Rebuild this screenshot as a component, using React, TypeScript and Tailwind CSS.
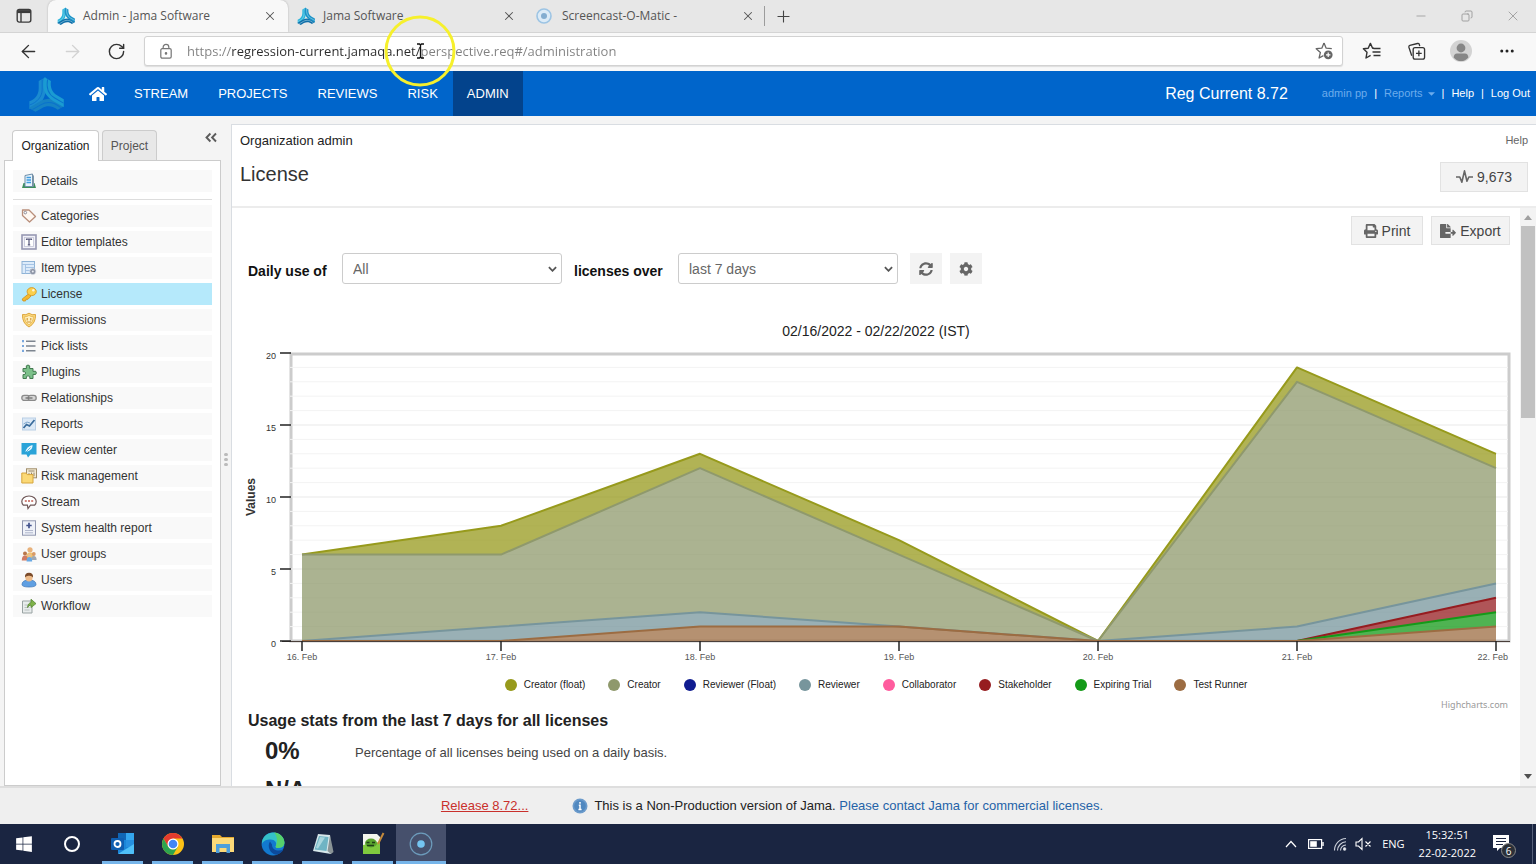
import { useState } from "react";
import type { ReactNode } from "react";
import { ArrowLeft, ArrowRight, Copy, Minus, MoreHorizontal, Plus, RotateCw, X } from "lucide-react";
import { FaCog, FaFileExport, FaHome, FaPrint, FaSyncAlt, FaWindows } from "react-icons/fa";

// ---------- data ----------

const days = ["16. Feb", "17. Feb", "18. Feb", "19. Feb", "20. Feb", "21. Feb", "22. Feb"];

// stacked tops and bottoms per day, drawn from the top layer down
const layers = [
  { name: "Creator (float)", color: "#979a1c", top: [6, 8, 13, 7, 0, 19, 13], base: [6, 6, 12, 6, 0, 18, 12] },
  { name: "Creator", color: "#8f996c", top: [6, 6, 12, 6, 0, 18, 12], base: [0, 1, 2, 1, 0, 1, 4] },
  { name: "Reviewer", color: "#77959c", top: [0, 1, 2, 1, 0, 1, 4], base: [0, 0, 1, 1, 0, 0, 3] },
  { name: "Stakeholder", color: "#961c20", top: [0, 0, 0, 0, 0, 0, 3], base: [0, 0, 0, 0, 0, 0, 2], from: 5 },
  { name: "Expiring Trial", color: "#149a18", top: [0, 0, 0, 0, 0, 0, 2], base: [0, 0, 0, 0, 0, 0, 1], from: 5 },
  { name: "Test Runner", color: "#9c6c42", top: [0, 0, 1, 1, 0, 0, 1], base: [0, 0, 0, 0, 0, 0, 0] },
];

const legend = [
  { name: "Creator (float)", color: "#979a1c" },
  { name: "Creator", color: "#8f996c" },
  { name: "Reviewer (Float)", color: "#101c90" },
  { name: "Reviewer", color: "#77959c" },
  { name: "Collaborator", color: "#ff5c9e" },
  { name: "Stakeholder", color: "#961c20" },
  { name: "Expiring Trial", color: "#149a18" },
  { name: "Test Runner", color: "#9c6c42" },
];

const px = (i: number) => 62 + i * 199;
const py = (v: number) => 300 - v * 14.4;

// ---------- logos and icons ----------

function JamaLogo({ className, dim }: { className: string; dim?: boolean }) {
  const blade = "M15.6 1 L9.5 4.5 V11 C9.5 17 6 20.5 1.2 22.5 V29 C10 27.5 15.6 21 15.6 12 Z";
  const colors = dim ? ["#1b8bd0", "#1682c4", "#1a9bd2"] : ["#2bb5dc", "#0f6ea8", "#1c93c8"];
  return (
    <svg viewBox="0 0 32 32" className={className} aria-hidden="true">
      {[0, 240, 120].map((deg, i) => (
        <g key={deg} transform={`rotate(${deg} 16 19)`}>
          <path d={blade} fill={colors[i]} />
          <path d="M12.6 3 V12 C12.6 18.5 8 23.5 1.4 25.8" fill="none" stroke={dim ? "#0a72cc" : "#bfe6f3"} strokeWidth="0.8" />
        </g>
      ))}
    </svg>
  );
}

function CastIcon() {
  return (
    <svg viewBox="0 0 16 16" className="h-4 w-4" aria-hidden="true">
      <circle cx="8" cy="8" r="7" fill="#dcebf7" stroke="#9cc4e4" strokeWidth="1.6" />
      <circle cx="8" cy="8" r="3" fill="#84add0" />
    </svg>
  );
}

const icons: Record<string, ReactNode> = {
  Details: (
    <>
      <path d="M1 15 L2.5 10 H13.5 L15 15Z" fill="#3c8f5c" />
      <path d="M4 2.5 L11.5 1 V13.5 H4Z" fill="#e8f4fc" stroke="#6d8da8" />
      <path d="M5.5 4.5h4.5M5.5 7h4.5M5.5 9.5h4.5" stroke="#3d9be0" strokeWidth="1.4" />
      <path d="M11.5 1 L13 3 V13.5 H11.5Z" fill="#7f96a8" />
    </>
  ),
  Categories: (
    <>
      <path d="M1.5 2 H8 L14.5 8.5 L8.5 14 L1.5 7.5Z" fill="#fff8f2" stroke="#b98f7b" strokeWidth="1.3" strokeLinejoin="round" />
      <circle cx="4.3" cy="4.6" r="1.3" fill="#fff" stroke="#8b8b96" />
    </>
  ),
  "Editor templates": (
    <>
      <rect x="1" y="1" width="14" height="14" fill="#f1f1f8" stroke="#9798b2" strokeWidth="1.6" />
      <rect x="3.5" y="3.5" width="9" height="9" fill="#fff" stroke="#c3c4d6" strokeWidth="0.8" />
      <path d="M5.5 6V5.2h5V6M8 5.2v5.6M6.8 10.8h2.4" stroke="#55567a" strokeWidth="1.2" fill="none" />
    </>
  ),
  "Item types": (
    <>
      <rect x="1" y="1.5" width="12.5" height="12" fill="#dcebfa" stroke="#8fb3d6" />
      <path d="M1 4.5h12.5M4.5 4.5v9M4.5 7.5h9M4.5 10.5h9" stroke="#9fc0e2" strokeWidth="0.9" />
      <circle cx="11.8" cy="11.6" r="3" fill="#8d95a6" stroke="#d9dde6" strokeDasharray="1.4 1" />
      <circle cx="11.8" cy="11.6" r="1" fill="#e9ecf2" />
    </>
  ),
  License: (
    <>
      <path d="M8 7.5 L1.2 13 L2 15 H4.5 L5 13.3 H7 L10 10Z" fill="#f5b92d" stroke="#cf8e1c" strokeWidth="0.8" />
      <ellipse cx="10.7" cy="5.6" rx="4.6" ry="4" fill="#fbd04d" stroke="#d2921c" strokeWidth="0.8" />
      <circle cx="12.3" cy="4.3" r="1.2" fill="#fff6d6" />
    </>
  ),
  Permissions: (
    <>
      <path d="M1.5 2.5 Q5 3.5 8 1.2 Q11 3.5 14.5 2.5 Q15 11 8 15 Q1 11 1.5 2.5Z" fill="#fbd87a" stroke="#dda63f" />
      <path d="M8 3.4 Q10 5 12.4 4.6 Q12.4 10 8 12.8 Q3.6 10 3.6 4.6 Q6 5 8 3.4Z" fill="#fff0bf" stroke="#e3ae45" strokeWidth="0.7" />
      <path d="M6.2 6v2.5M9.8 6v2.5M6 10h4" stroke="#cf9433" strokeWidth="1.1" />
    </>
  ),
  "Pick lists": (
    <>
      <path d="M5 3.2h9.5M5 8h9.5M5 12.8h9.5" stroke="#7d8590" strokeWidth="1.5" />
      <path d="M1 3.2h2M1 8h2M1 12.8h2" stroke="#79a7dd" strokeWidth="2.2" />
    </>
  ),
  Plugins: (
    <path
      d="M2 4.5 H5.4 Q4.4 1 7 1 Q9.6 1 8.6 4.5 H12 V7.4 Q15.4 6.2 15.4 8.9 Q15.4 11.4 12 10.4 V14.5 H8.8 Q9.6 11.8 7 11.8 Q4.6 11.8 5.4 14.5 H2 V10.6 Q4.6 11.2 4.6 9 Q4.6 7 2 7.8Z"
      fill="#7cc08a" stroke="#437a50"
    />
  ),
  Relationships: (
    <>
      <rect x="0.8" y="5.4" width="8" height="5" rx="2.5" fill="#d6d6d6" stroke="#8a8a8a" strokeWidth="1.3" />
      <rect x="7.2" y="5.4" width="8" height="5" rx="2.5" fill="#d6d6d6" stroke="#8a8a8a" strokeWidth="1.3" />
      <path d="M4.5 8h7" stroke="#747474" strokeWidth="1.4" />
    </>
  ),
  Reports: (
    <>
      <rect x="1.5" y="2" width="13" height="12" fill="#dce9f6" stroke="#b9cfe6" />
      <path d="M2.5 12 L5.5 8.5 L8.5 10 L13.5 4" stroke="#3a6c9c" strokeWidth="1.8" fill="none" />
      <path d="M2.5 8 L6 6 L9 7" stroke="#7ea6cc" strokeWidth="1" fill="none" />
    </>
  ),
  "Review center": (
    <>
      <path d="M0.5 1 H15.5 V12.5 H9.5 L7 15.5 L5.5 12.5 H0.5Z" fill="#2aa3d8" />
      <path d="M4.5 10 Q5.5 4.5 11.5 3 Q12 7.5 6.5 9.5Z" fill="#e9f7fd" />
      <path d="M4 11 L9.5 5.5" stroke="#2aa3d8" strokeWidth="0.8" />
    </>
  ),
  "Risk management": (
    <>
      <rect x="5.5" y="0.8" width="10" height="9" fill="#f3ead2" stroke="#a08d6a" />
      <path d="M7.5 3h6M8 5.2v3M10.5 4.6v3.6M13 4.6v3.6" stroke="#8b7c60" strokeWidth="0.9" />
      <path d="M0.8 5 H5 L6.2 6.6 H12 V15 H0.8Z" fill="#fbd976" stroke="#d6a53d" />
    </>
  ),
  Stream: (
    <>
      <path d="M8 2 C12.5 2 15.2 4.6 15.2 7.6 C15.2 9.2 14.6 10.4 13.6 11.2 H9.5 L7 14.5 L6.4 11.2 H2.4 C1.4 10.4 0.8 9.2 0.8 7.6 C0.8 4.6 3.5 2 8 2Z" fill="#fff" stroke="#6f5757" strokeWidth="1.2" />
      <path d="M3.8 7h2M7 7h2M10.2 7h2" stroke="#c05c50" strokeWidth="1.4" />
    </>
  ),
  "System health report": (
    <>
      <rect x="1.5" y="0.8" width="13" height="14.4" fill="#eef1f8" stroke="#9097b0" />
      <path d="M8 2.8v5.4M5.3 5.5h5.4" stroke="#42528c" strokeWidth="1.7" />
      <path d="M4 10.5h8M4 12.8h8" stroke="#a9b0c6" strokeWidth="0.9" />
    </>
  ),
  "User groups": (
    <>
      <circle cx="9" cy="3.8" r="2.6" fill="#e8b27c" />
      <path d="M5 12 Q5 6.5 9 6.5 Q13.5 6.5 13.5 12Z" fill="#f1c56c" />
      <circle cx="4" cy="7.4" r="2" fill="#b9764a" />
      <path d="M0.8 14.5 Q0.8 9.5 4 9.5 Q7 9.5 7 14.5Z" fill="#cf7a64" />
      <circle cx="12.8" cy="8" r="1.9" fill="#d89a68" />
      <path d="M10 14 Q10 10 12.8 10 Q15.6 10 15.6 14Z" fill="#9fa8b4" />
      <circle cx="8.4" cy="9.2" r="1.8" fill="#eabf94" />
      <path d="M5.6 15.4 Q5.6 11 8.4 11 Q11.2 11 11.2 15.4Z" fill="#69a9e4" />
    </>
  ),
  Users: (
    <>
      <path d="M1 12.6 Q1 8 8 8 Q15 8 15 12.6 Q15 15 8 15 Q1 15 1 12.6Z" fill="#5f9fe2" stroke="#3a72b4" strokeWidth="0.7" />
      <ellipse cx="8" cy="5.6" rx="3.6" ry="4" fill="#edbb8a" />
      <path d="M4 5.4 Q3.6 0.8 8 0.8 Q12.4 0.8 12 5.4 Q10.5 3.6 8 3.8 Q5.4 3.6 4 5.4Z" fill="#7b4b2a" />
    </>
  ),
  Workflow: (
    <>
      <path d="M1.5 3 H11 V15 H1.5Z" fill="#e8ecec" stroke="#99a3a3" />
      <path d="M3.5 7h5M3.5 9.5h5M3.5 12h5" stroke="#b4bcbc" strokeWidth="0.9" />
      <path d="M6.5 9.5 Q7 5 10 4.6 V1.2 L15 5.6 L10 9.6 V7 Q8 7 6.5 9.5Z" fill="#7fb24a" stroke="#4f7f2c" strokeWidth="0.7" />
    </>
  ),
};

const menu = Object.keys(icons);

// ---------- browser chrome ----------

function BrowserTabs() {
  const tabs = [
    { title: "Admin - Jama Software", icon: <JamaLogo className="h-[18px] w-[18px]" />, active: true },
    { title: "Jama Software", icon: <JamaLogo className="h-[18px] w-[18px]" /> },
    { title: "Screencast-O-Matic -", icon: <CastIcon /> },
  ];
  return (
    <div className="flex h-8 shrink-0 items-stretch bg-[#e7e7e7]">
      <button aria-label="Tab actions" className="flex w-12 items-center justify-center">
        <svg viewBox="0 0 16 16" className="h-4 w-4" fill="none" stroke="#3c3c3c" strokeWidth="1.4">
          <rect x="1.2" y="1.5" width="13.6" height="12.6" rx="2" />
          <path d="M1.2 3.6h13.6" strokeWidth="3" />
          <path d="M5 5v9" />
        </svg>
      </button>
      {tabs.map((t) => (
        <div
          key={t.title}
          className={
            t.active
              ? "flex w-[240px] items-center rounded-t-lg bg-[#f8f8f8] px-[9px] shadow-[0_0_2px_#aaa]"
              : "flex w-[239px] items-center px-[9px]"
          }
        >
          <span className="flex w-[26px] items-center">{t.icon}</span>
          <button className="flex-1 text-left font-['Open_Sans',sans-serif] text-xs text-[#555]">{t.title}</button>
          <button aria-label={`Close ${t.title}`} className="flex w-[18px] justify-center text-[#555]">
            <X size={14} strokeWidth={1.8} />
          </button>
        </div>
      ))}
      <div className="my-[6px] -ml-[2px] w-px bg-[#9c9c9c]" />
      <button aria-label="New tab" className="flex w-9 items-center justify-center text-[#444]">
        <Plus size={19} strokeWidth={1.4} />
      </button>
      <div className="flex flex-1 justify-end text-[#999]">
        <button aria-label="Minimize" className="flex w-[46px] items-center justify-center"><Minus size={14} strokeWidth={1.4} /></button>
        <button aria-label="Restore" className="flex w-[46px] items-center justify-center"><Copy size={12} strokeWidth={1.8} className="-scale-x-100" /></button>
        <button aria-label="Close" className="flex w-[46px] items-center justify-center"><X size={16} strokeWidth={1.3} /></button>
      </div>
    </div>
  );
}

function AddressBar() {
  return (
    <div className="flex h-[39px] shrink-0 items-center border-t border-[#d4d4d4] bg-[#f8f8f8] px-[6px] pb-[2px]">
      <button aria-label="Back" className="flex w-11 justify-center text-[#333]"><ArrowLeft size={21} strokeWidth={1.6} /></button>
      <button aria-label="Forward" className="flex w-11 justify-center text-[#d2d2d2]"><ArrowRight size={21} strokeWidth={1.6} /></button>
      <button aria-label="Refresh" className="flex w-11 justify-center text-[#333]"><RotateCw size={19} strokeWidth={1.8} /></button>
      <div className="ml-[6px] flex h-[30px] flex-1 items-center rounded-[3px] border border-[#d2d2d2] bg-white shadow-[0_1px_1px_#ddd]">
        <svg viewBox="0 0 16 18" className="mx-[13px] h-[17px] w-4 shrink-0" fill="none" stroke="#777" strokeWidth="1.3">
          <rect x="2.5" y="6" width="11" height="10" rx="1.5" />
          <path d="M5 6V4.5a3 3 0 0 1 6 0V6" />
          <circle cx="8" cy="11" r="0.7" fill="#777" />
        </svg>
        <input
          aria-label="Address"
          defaultValue="https://regression-current.jamaqa.net/perspective.req#/administration"
          className="h-full min-w-0 flex-1 bg-[linear-gradient(90deg,#808080_45px,#2a2a2a_45px,#2a2a2a_233px,#808080_233px)] bg-clip-text font-['Open_Sans',sans-serif] text-[13px] text-transparent outline-none"
        />
        <button aria-label="Add to favorites" className="mr-2">
          <svg viewBox="0 0 20 20" className="h-5 w-5">
            <path d="M10 2 L12.2 7.2 L17.8 7.7 M10 2 L7.8 7.2 L2.2 7.7 L6.4 11.4 L5.1 17 L9.4 14.6" fill="none" stroke="#666" strokeWidth="1.3" strokeLinejoin="round" />
            <circle cx="14.2" cy="13.8" r="4.4" fill="#666" />
            <path d="M14.2 11.6v4.4M12 13.8h4.4" stroke="#fff" strokeWidth="1.2" />
          </svg>
        </button>
      </div>
      <button aria-label="Favorites" className="ml-[7px] flex w-11 justify-center">
        <svg viewBox="0 0 20 20" className="h-5 w-5" fill="none" stroke="#333" strokeWidth="1.4" strokeLinejoin="round">
          <path d="M12 7.2 H10.6 L8.4 2.4 L6.2 7.2 L1.4 7.8 L5 11.3 L4 17 L8.6 14.4" />
          <path d="M11.5 7.5h7M10.5 11h8M11.5 14.5h7" />
        </svg>
      </button>
      <button aria-label="Collections" className="flex w-11 justify-center">
        <svg viewBox="0 0 20 20" className="h-[19px] w-[19px]" fill="none" stroke="#333" strokeWidth="1.4" strokeLinejoin="round">
          <path d="M5 14.5 L2 5.5 Q1.6 4 3 3.6 L11 1.6 Q12.6 1.2 13 2.8 L13.4 4.4" />
          <rect x="6.5" y="6" width="12" height="12" rx="2" />
          <path d="M12.5 9v6M9.5 12h6" />
        </svg>
      </button>
      <button aria-label="Profile" className="flex w-[46px] justify-center">
        <svg viewBox="0 0 22 22" className="h-[22px] w-[22px]">
          <circle cx="11" cy="11" r="11" fill="#d3d3d3" />
          <circle cx="11" cy="8" r="4.4" fill="#868686" />
          <path d="M3.6 17.4 Q4 13.6 7 13.6 H15 Q18 13.6 18.4 17.4 Q15.4 21 11 21 Q6.6 21 3.6 17.4Z" fill="#868686" />
        </svg>
      </button>
      <button aria-label="Settings and more" className="flex w-[46px] justify-center text-[#222]"><MoreHorizontal size={18} /></button>
    </div>
  );
}

// ---------- app ----------

function TopNav() {
  return (
    <header className="flex h-[45px] shrink-0 items-center bg-[#0065cb] text-white">
      <a href="#top" aria-label="Jama" className="ml-[28px]"><JamaLogo dim className="h-9 w-9" /></a>
      <a href="#home" aria-label="Home" className="ml-[25px] mr-3"><FaHome size={18} /></a>
      <nav className="flex h-full items-stretch text-[13px]">
        {["STREAM", "PROJECTS", "REVIEWS", "RISK", "ADMIN"].map((n) => (
          <a
            key={n}
            href={`#${n.toLowerCase()}`}
            className={n === "ADMIN" ? "flex items-center bg-[#03438c] px-[14px]" : "flex items-center px-[15px]"}
          >
            {n}
          </a>
        ))}
      </nav>
      <span className="ml-auto mr-[34px] text-base">Reg Current 8.72</span>
      <div className="flex items-center gap-[7px] pr-[6px] text-[11px]">
        <a href="#me" className="text-[#6cacec]">admin pp</a>
        <span>|</span>
        <a href="#reports" className="flex items-center gap-[5px] text-[#6cacec]">
          Reports
          <svg viewBox="0 0 8 4" className="h-1 w-[7px]"><path d="M0 0h8L4 4Z" fill="#6cacec" /></svg>
        </a>
        <span>|</span>
        <a href="#help">Help</a>
        <span>|</span>
        <a href="#logout">Log Out</a>
      </div>
    </header>
  );
}

function Sidebar() {
  const [current, setCurrent] = useState("License");
  return (
    <aside className="flex w-[217px] shrink-0 flex-col pt-[14px]">
      <div className="flex items-start pl-2">
        <button className="relative -mb-px h-[31px] w-[87px] rounded-t-sm border border-b-0 border-[#ccc] bg-white text-xs text-[#222]">Organization</button>
        <button className="ml-[3px] h-[30px] w-[55px] rounded-t-sm border border-b-0 border-[#ccc] bg-[#e8e8e8] text-xs text-[#555]">Project</button>
        <button aria-label="Collapse panel" className="ml-auto mr-1 pt-[2px]">
          <svg viewBox="0 0 12 10" className="h-[11px] w-3" fill="none" stroke="#5c5c5c" strokeWidth="1.9">
            <path d="M5.4 1 L1.5 5 L5.4 9M11 1 L7.1 5 L11 9" />
          </svg>
        </button>
      </div>
      <div className="flex-1 border border-[#ccc] bg-white px-2 pt-[9px]">
        {menu.map((m) => (
          <div key={m} className={m === "Details" ? "mb-[5px] border-b border-[#ddd] pb-[7px]" : "mb-1"}>
            <button
              onClick={() => setCurrent(m)}
              className={
                m === current
                  ? "flex h-[22px] w-full items-center gap-1 bg-[#b5e9fb] pl-2 text-xs text-[#333]"
                  : "flex h-[22px] w-full items-center gap-1 bg-[#f9f9f9] pl-2 text-xs text-[#333]"
              }
            >
              <svg viewBox="0 0 16 16" className="h-4 w-4" fill="none" aria-hidden="true">{icons[m]}</svg>
              {m}
            </button>
          </div>
        ))}
      </div>
    </aside>
  );
}

function UsageChart() {
  return (
    <svg viewBox="0 0 1272 326" className="block w-full font-['Liberation_Sans',Arial,sans-serif]" role="img" aria-label="Daily license usage">
      <rect x="51" y="13" width="1218" height="287" fill="#fff" stroke="#ccc" strokeWidth="3" />
      {Array.from({ length: 19 }, (_, i) => (
        <path key={i} d={`M50 ${py(i + 1)}H1268`} stroke={(i + 1) % 5 ? "#f3f3f3" : "#e9e9e9"} strokeWidth="1" />
      ))}
      {layers.map((l) => {
        const idx = days.map((_, i) => i).slice(l.from ?? 0);
        const top = idx.map((i) => `${px(i)},${py(l.top[i])}`);
        const base = idx.map((i) => `${px(i)},${py(l.base[i])}`).reverse();
        return (
          <g key={l.name}>
            <polygon points={[...top, ...base].join(" ")} fill={l.color} fillOpacity="0.75" />
            <polyline points={top.join(" ")} fill="none" stroke={l.color} strokeWidth="2" strokeLinejoin="round" />
          </g>
        );
      })}
      <path d="M42 300.5H1270" stroke="#4a3f3a" strokeWidth="1.2" />
      {[0, 5, 10, 15, 20].map((v) => (
        <g key={v}>
          <path d={`M40 ${py(v)}H51`} stroke="#222" strokeWidth="1.5" />
          <text x="36" y={py(v) + 6} textAnchor="end" fontSize="9" fill="#333">{v}</text>
        </g>
      ))}
      {days.map((d, i) => (
        <g key={d}>
          <path d={`M${px(i)} 300V310`} stroke="#222" strokeWidth="1.5" />
          <text x={i === 6 ? 1268 : px(i)} y="319" textAnchor={i === 6 ? "end" : "middle"} fontSize="9" fill="#555">{d}</text>
        </g>
      ))}
      <text transform="translate(15 156) rotate(-90)" textAnchor="middle" fontSize="12" fontWeight="bold" fill="#333">Values</text>
    </svg>
  );
}

function Select({ id, options }: { id: string; options: string[] }) {
  return (
    <div className="relative w-[220px]">
      <select id={id} className="h-[31px] w-full appearance-none rounded-[3px] border border-[#ccc] bg-white pl-[10px] text-sm text-[#666]">
        {options.map((o) => <option key={o}>{o}</option>)}
      </select>
      <svg viewBox="0 0 10 6" className="pointer-events-none absolute right-[5px] top-[13px] h-[6px] w-[9px]" fill="none" stroke="#555" strokeWidth="2">
        <path d="M1 1 L5 5 L9 1" />
      </svg>
    </div>
  );
}

const greyButton = "flex items-center justify-center border border-[#e2e2e2] bg-[#f3f3f3] text-sm text-[#444]";

function LicensePage() {
  return (
    <main className="flex min-w-0 flex-1 flex-col border-l border-t border-[#d9dde2] bg-white">
      <div className="flex h-[83px] shrink-0 justify-between border-b-2 border-[#ececec] pl-2 pr-2">
        <div>
          <p className="pt-[7px] text-[13px] leading-[18px] text-[#222]">Organization admin</p>
          <h1 className="mt-[10px] text-xl leading-7 text-[#333]">License</h1>
        </div>
        <div className="flex flex-col items-end">
          <a href="#help" className="pt-[6px] text-[11px] leading-[18px] text-[#666]">Help</a>
          <button className={`${greyButton} mt-[13px] h-[30px] w-[88px] gap-1`}>
            <svg viewBox="0 0 18 16" className="h-4 w-[17px]" fill="none" stroke="#666" strokeWidth="1.7" strokeLinejoin="round">
              <path d="M0 8 H4 L6.2 13.5 L9 1.5 L11.6 12.5 L13.6 8 H18" />
            </svg>
            9,673
          </button>
        </div>
      </div>

      <div className="flex min-h-0 flex-1">
        <div className="min-w-0 flex-1 overflow-hidden px-2">
          <div className="flex justify-end gap-2 pr-[2px] pt-2">
            <button className={`${greyButton} h-[29px] w-[72px] gap-1`}><FaPrint size={14} color="#666" />Print</button>
            <button className={`${greyButton} h-[29px] w-[79px] gap-1`}><FaFileExport size={16} color="#666" />Export</button>
          </div>

          <div className="mt-2 flex h-[31px] items-center pl-2 text-sm text-[#111]">
            <label htmlFor="kind" className="w-[94px] pt-[5px] font-bold">Daily use of</label>
            <Select id="kind" options={["All", "Creator", "Reviewer"]} />
            <label htmlFor="range" className="ml-3 w-[104px] pt-[5px] font-bold">licenses over</label>
            <Select id="range" options={["last 7 days", "last 30 days"]} />
            <button aria-label="Refresh chart" className="ml-3 flex h-[31px] w-8 items-center justify-center bg-[#f3f3f3] text-[#666]"><FaSyncAlt size={14} /></button>
            <button aria-label="Chart settings" className="ml-2 flex h-[31px] w-8 items-center justify-center bg-[#f3f3f3] text-[#666]"><FaCog size={14} /></button>
          </div>

          <h2 className="mt-[37px] text-center text-sm text-[#222]">02/16/2022 - 02/22/2022 (IST)</h2>
          <UsageChart />
          <div className="mt-[10px] flex justify-center gap-[23px]">
            {legend.map((l) => (
              <button key={l.name} className="flex items-center gap-[7px] text-[10px] leading-4 text-[#222]">
                <svg viewBox="0 0 12 12" className="h-3 w-3"><circle cx="6" cy="6" r="6" fill={l.color} /></svg>
                {l.name}
              </button>
            ))}
          </div>
          <p className="mt-[6px] pr-1 text-right font-['Noto_Sans',sans-serif] text-[9px] leading-3 text-[#999]">
            <a href="#highcharts">Highcharts.com</a>
          </p>

          <section className="pl-2">
            <h3 className="text-base font-bold leading-5 text-[#222]">Usage stats from the last 7 days for all licenses</h3>
            {[
              ["0%", "Percentage of all licenses being used on a daily basis."],
              ["N/A", ""],
            ].map(([value, label]) => (
              <div key={value} className="flex h-[39px] items-center pl-[17px]">
                <strong className="w-[90px] text-2xl text-[#222]">{value}</strong>
                <span className="pt-[5px] text-[13px] text-[#444]">{label}</span>
              </div>
            ))}
          </section>
        </div>

        {/* scrollbar */}
        <div className="flex w-4 shrink-0 flex-col items-center bg-[#f3f3f3] py-[7px]">
          <svg viewBox="0 0 8 5" className="h-[5px] w-2"><path d="M0 5 L4 0 L8 5Z" fill="#a0a0a0" /></svg>
          <div className="mt-[6px] h-[34%] w-[14px] bg-[#c1c1c1]" />
          <svg viewBox="0 0 8 5" className="mt-auto h-[5px] w-2"><path d="M0 0 L4 5 L8 0Z" fill="#505050" /></svg>
        </div>
      </div>
    </main>
  );
}

function Footer() {
  return (
    <footer className="flex h-[38px] shrink-0 items-center justify-center border-t-2 border-[#dedede] bg-[#efefef] pl-2 text-[13px]">
      <a href="#release" className="text-[#c9302c] underline">Release 8.72...</a>
      <svg viewBox="0 0 16 16" className="ml-11 mr-[6px] h-4 w-4">
        <circle cx="8" cy="8" r="7.5" fill="#6c9bcb" />
        <circle cx="8" cy="8" r="5.8" fill="#5088c0" />
        <path d="M8 4v1.8M6.8 7.2H8v4.2M6.4 11.6h3.2" stroke="#fff" strokeWidth="1.5" fill="none" />
      </svg>
      <span className="text-[#222]">
        This is a Non-Production version of Jama. <a href="#contact" className="text-[#2563a8]">Please contact Jama for commercial licenses.</a>
      </span>
    </footer>
  );
}

// ---------- taskbar ----------

const apps = [
  {
    name: "Outlook",
    icon: (
      <>
        <rect x="7" y="1" width="16" height="21" rx="1" fill="#1a86d8" />
        <rect x="7" y="1" width="8" height="7" fill="#1066b5" />
        <rect x="15" y="1" width="8" height="7" fill="#34a6ee" />
        <rect x="15" y="8" width="8" height="7" fill="#2690e0" />
        <path d="M7 22 L23 12 V21 Q23 22 22 22Z" fill="#4fc0f8" />
        <rect x="0" y="6" width="13" height="12" rx="1" fill="#0f5eb0" />
        <circle cx="6.5" cy="12" r="3" fill="none" stroke="#fff" strokeWidth="1.8" />
      </>
    ),
  },
  {
    name: "Chrome",
    icon: (
      <>
        <circle cx="12" cy="12" r="11" fill="#fbc116" />
        <path d="M2.5 6.5 A11 11 0 0 1 21.5 6.5 H12 L7.2 14.8Z" fill="#e33b2e" />
        <path d="M2.5 6.5 L7.2 14.8 L12 17.5 L16.8 14.8 L12 23 A11 11 0 0 1 2.5 6.5Z" fill="#2da44e" />
        <circle cx="12" cy="12" r="5.5" fill="#fff" />
        <circle cx="12" cy="12" r="4.3" fill="#4286f5" />
      </>
    ),
  },
  {
    name: "File Explorer",
    icon: (
      <>
        <path d="M1 3 H9 L11 5 H23 V20 H1Z" fill="#e5a92e" />
        <rect x="1" y="6" width="22" height="14" fill="#fcd978" />
        <path d="M5 21 V12 H19 V21 H15.5 V16 H8.5 V21Z" fill="#4e9fdb" />
      </>
    ),
  },
  {
    name: "Edge",
    icon: (
      <>
        <circle cx="12" cy="12" r="11.4" fill="#1279cf" />
        <path d="M1 10 C2 4 7 0.6 12 0.6 C19 0.6 23.4 5.6 23.4 10.6 C23.4 14.4 20.4 16 17.6 16 C15 16 14 15 15 13.4 C16 11 14 7.6 9.6 7.6 C5.6 7.6 2 9 1 12Z" fill="#35c1c8" />
        <path d="M13 0.6 C19 1 23.4 5.6 23.4 10.6 C23.4 14.4 20.4 16 17.6 16 C15 16 14 15 15 13.4 C17 9 16 4 13 0.6Z" fill="#56d16c" />
        <path d="M9 9.5 C6 14 8.6 21.5 15 22.8 C18.6 22 21.4 19.6 22.4 17.4 C17 20 10.6 17.6 11 12.4Z" fill="#0c4a9c" />
      </>
    ),
  },
  {
    name: "Notepad",
    icon: (
      <>
        <path d="M7 2 L19 3 L20 22 L2 19Z" fill="#d7e7ea" />
        <path d="M8 4 L17.5 5 L15.5 19 L3.5 17.5Z" fill="#6fb4c4" />
        <path d="M9 5 L14 5.5 L7 16.5 L5 16Z" fill="#a9d6de" />
        <path d="M19 3 L22.5 20 L20 22 L16.5 19Z" fill="#8a9496" />
      </>
    ),
  },
  {
    name: "Notepad++",
    icon: (
      <>
        <path d="M2 2 H16 L19 5 V22 H2Z" fill="#f3f6ee" />
        <path d="M2 13 L19 10 V22 H2Z" fill="#7fc93e" />
        <ellipse cx="10" cy="11" rx="6" ry="4.4" fill="#5aa52e" />
        <path d="M5.5 10.5h3M11 10.5h3M6 13.5h7" stroke="#1f3f18" strokeWidth="1.4" />
        <path d="M22.500 1 L17 12" stroke="#c48a3c" strokeWidth="2" />
      </>
    ),
  },
  {
    name: "Screencast-O-Matic",
    active: true,
    icon: (
      <>
        <circle cx="12" cy="12" r="10.8" fill="none" stroke="#6d9cbc" strokeWidth="1.2" />
        <circle cx="12" cy="12" r="3.8" fill="#74c4f0" />
      </>
    ),
  },
];

function Taskbar() {
  return (
    <div className="flex h-10 shrink-0 items-stretch bg-[#1a2541] text-white">
      <button aria-label="Start" className="flex w-12 items-center justify-center"><FaWindows size={18} /></button>
      <button aria-label="Search" className="flex w-12 items-center justify-center">
        <span className="h-4 w-4 rounded-full border-2 border-white" />
      </button>
      {apps.map((a) => (
        <button
          key={a.name}
          aria-label={a.name}
          className={
            a.active
              ? "flex w-[50px] flex-col items-center justify-between bg-[#46506c] pt-2"
              : "flex w-[50px] flex-col items-center justify-between pl-[6px] pr-[3px] pt-2"
          }
        >
          <svg viewBox="0 0 24 24" className="h-6 w-6">{a.icon}</svg>
          <span className="h-[3px] w-full bg-[#76b5ea]" />
        </button>
      ))}
      <div className="ml-auto flex items-center font-['Open_Sans',sans-serif] text-[11px]">
        <svg viewBox="0 0 12 8" className="mr-[11px] h-2 w-3" fill="none" stroke="#fff" strokeWidth="1.2"><path d="M1 7 L6 1.5 L11 7" /></svg>
        <svg viewBox="0 0 16 10" className="mr-[9px] h-[10px] w-4">
          <rect x="0.6" y="0.6" width="13" height="8.8" fill="none" stroke="#fff" strokeWidth="1.2" />
          <rect x="2.2" y="2.2" width="6.6" height="5.6" fill="#fff" />
          <path d="M15 3v4" stroke="#fff" strokeWidth="1.4" />
        </svg>
        <svg viewBox="0 0 14 14" className="mr-2 h-[14px] w-[14px]" fill="none" stroke="#c9ced8" strokeWidth="1.1">
          <path d="M1.5 13.5 A12 12 0 0 1 13 1.5M4.5 13.5 A9 9 0 0 1 13 4.8M7.5 13.5 A6 6 0 0 1 13 8" />
          <circle cx="11.6" cy="12" r="1.2" fill="#fff" />
        </svg>
        <svg viewBox="0 0 17 14" className="mr-[10px] h-[14px] w-[17px]" fill="none" stroke="#fff" strokeWidth="1.1">
          <path d="M1 5 H3.5 L7 1.5 V12.5 L3.5 9 H1ZM10.5 4.5 L15.5 9.5M15.5 4.5 L10.5 9.5" />
        </svg>
        <span>ENG</span>
        <div className="ml-[14px] text-center leading-[18px]">
          <p>15:32:51</p>
          <p>22-02-2022</p>
        </div>
        <button aria-label="6 notifications" className="relative ml-4 h-6 w-6">
          <svg viewBox="0 0 24 24" className="h-6 w-6">
            <path d="M1 3 H17 V16 H8 L5 19 V16 H1Z" fill="#fff" />
            <path d="M4 6.5h10M4 9.5h10M4 12.5h7" stroke="#1a2541" strokeWidth="1.2" />
          </svg>
          <span className="absolute -bottom-[2px] right-0 flex h-[15px] w-[15px] items-center justify-center rounded-full border border-[#888] bg-[#2b3038] text-[10px] leading-none">6</span>
        </button>
        <span className="ml-4 mr-[3px] h-10 w-px bg-[#566079]" />
      </div>
    </div>
  );
}

export default function App() {
  return (
    <div className="relative flex h-screen flex-col overflow-hidden bg-[#f4f4f4] font-['Liberation_Sans',Arial,sans-serif]">
      <BrowserTabs />
      <AddressBar />
      <TopNav />
      <div className="flex min-h-0 flex-1 pl-1">
        <Sidebar />
        <div className="flex w-[10px] shrink-0 flex-col items-center justify-center gap-[2px] pt-4">
          {[0, 1, 2].map((i) => <span key={i} className="h-[3px] w-1 rounded-full bg-[#bbb]" />)}
        </div>
        <div className="flex min-w-0 flex-1 pt-2">
          <LicensePage />
        </div>
      </div>
      <Footer />
      <Taskbar />

      {/* pointer with its highlight ring */}
      <svg viewBox="0 0 72 72" className="pointer-events-none absolute left-[384px] top-[15px] h-[72px] w-[72px]" fill="none">
        <circle cx="36" cy="36" r="34" stroke="#f6f02c" strokeWidth="3" />
        <path d="M33 29h2.5l1 1 1-1H40M33 43h2.5l1-1 1 1H40M36.5 30v12" stroke="#111" strokeWidth="1.3" />
      </svg>
    </div>
  );
}
